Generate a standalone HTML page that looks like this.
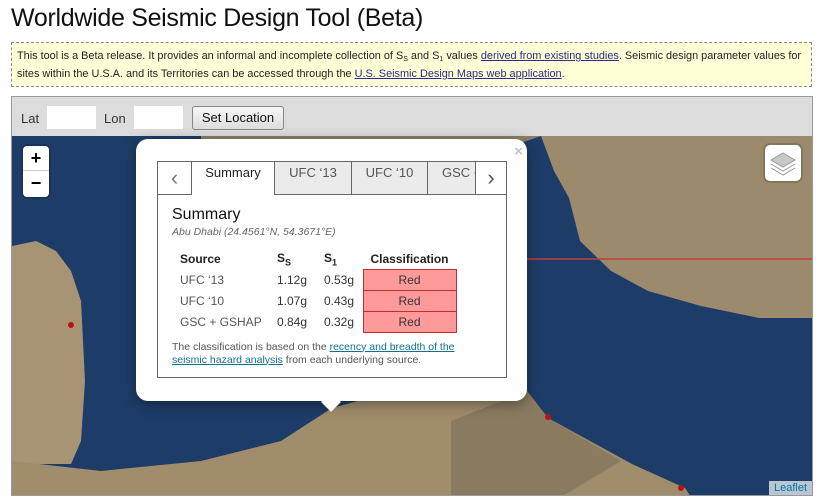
<!DOCTYPE html>
<html><head><style>
*{box-sizing:border-box}
body{margin:0;width:822px;height:500px;overflow:hidden;background:#fff;font-family:"Liberation Sans",Arial,sans-serif;position:relative}
h1{position:absolute;left:11px;top:4px;margin:0;font-weight:normal;font-size:25px;color:#111;letter-spacing:-0.3px}
.note{position:absolute;left:11px;top:42px;width:801px;height:45px;background:#ffffd8;border:1px dashed #888;font-size:10.9px;line-height:16px;padding:5px 5px;color:#222;white-space:nowrap;overflow:hidden}
.note a{color:#2a2a8a}
.note sub{font-size:7px;vertical-align:baseline;position:relative;top:2px}
.map{position:absolute;left:11px;top:96px;width:802px;height:400px;border:1px solid #999;overflow:hidden}
.bar{position:absolute;left:0;top:0;width:100%;height:39px;background:#dcdcdc;font-size:13px;color:#333}
.bar span{position:absolute;top:14px}
.inp{position:absolute;top:9px;width:49px;height:23px;background:#fff}
.btn{position:absolute;left:180px;top:9px;width:92px;height:24px;border:1px solid #888;border-radius:3px;background:linear-gradient(#f6f6f6,#ddd);font-size:13px;text-align:center;line-height:22px;color:#111}
svg.bg{position:absolute;left:0;top:39px}
.zoom{position:absolute;left:11px;top:49px;width:26px;height:51px;background:#fff;border-radius:4px;box-shadow:0 0 0 2px rgba(0,0,0,.15)}
.zoom div{height:25px;text-align:center;font-weight:bold;font-size:18px;line-height:24px;color:#000}
.layers{position:absolute;left:753px;top:48px;width:36px;height:36px;background:#fff;border-radius:5px;box-shadow:0 0 0 2px rgba(0,0,0,.15)}
.attr{position:absolute;right:0;bottom:0;background:rgba(255,255,255,.7);font-size:11px;color:#0078a8;padding:1px 5px}
.pop{position:absolute;left:124px;top:42px;width:391px;height:262px;background:#fff;border-radius:12px;box-shadow:0 3px 14px rgba(0,0,0,.4)}
.tip{position:absolute;left:188px;top:256px;width:14px;height:14px;background:#fff;transform:rotate(45deg)}
.x{position:absolute;right:4px;top:4px;color:#c3c3c3;font-size:15px;font-weight:bold}
.box{position:absolute;left:21px;top:22px;width:350px;height:217px;border:1px solid #666}
.tabs{position:absolute;left:0;top:0;width:348px;height:33px}
.t{position:absolute;top:0;height:33px;border-right:1px solid #666;border-bottom:1px solid #666;background:#ebebeb;font-size:13px;color:#555;text-align:center;line-height:20px;padding-top:1px;overflow:hidden;white-space:nowrap}
.content{position:absolute;left:14px;top:44px;width:320px}
.content h2{margin:0;font-weight:normal;font-size:16px;color:#111}
.loc{font-style:italic;font-size:10.5px;color:#666;margin-top:2px}
table{border-collapse:collapse;margin-top:11px;margin-left:8px;font-size:12px}
th{font-weight:bold;color:#222;text-align:left;padding:0 8px 0 0;height:20px}
td{color:#555;padding:0 8px 0 0;height:21px}
td.v{color:#333}
td.r{background:#ff9a9a;border:1px solid #c03030;text-align:center;color:#333;width:93px;padding:0}
.foot{font-size:10.5px;color:#555;line-height:13px;margin-top:8px}
.foot a{color:#107090}
</style></head><body>
<h1>Worldwide Seismic Design Tool (Beta)</h1>
<div class="note">This tool is a Beta release. It provides an informal and incomplete collection of S<sub>S</sub> and S<sub>1</sub> values <a href="#">derived from existing studies</a>. Seismic design parameter values for<br>sites within the U.S.A. and its Territories can be accessed through the <a href="#">U.S. Seismic Design Maps web application</a>.</div>
<div class="map">
<div class="bar"><span style="left:9px">Lat</span><div class="inp" style="left:35px"></div><span style="left:92px">Lon</span><div class="inp" style="left:122px"></div><div class="btn">Set Location</div></div>
<svg class="bg" width="802" height="361" viewBox="11 135 802 361">
<rect x="11" y="135" width="802" height="361" fill="#1d3d68"/>
<polygon fill="#8f7f63" points="200,135 540,135 520,142 200,142"/>
<polygon fill="#9c8a6c" points="540,135 553,170 568,197 579,240 610,270 647,290 700,305 758,317 813,317 813,135"/>
<polygon fill="#a79474" points="11,245 35,240 55,250 70,270 80,300 84,380 80,440 70,463 11,463"/>
<polygon fill="#a08d6c" points="11,460 100,470 200,460 280,440 331,407 368,397 430,380 526,390 547,417 631,463 684,487 690,496 11,496"/>
<polygon fill="#8a7a60" points="450,420 526,390 547,417 620,460 560,496 450,496"/>
<line x1="526" y1="258" x2="813" y2="258" stroke="#c04040" stroke-width="1.5"/>
<circle cx="70" cy="324" r="3" fill="#c01010"/><circle cx="547" cy="416" r="3" fill="#c01010"/><circle cx="680" cy="487" r="3" fill="#c01010"/>
</svg>
<div class="zoom"><div style="border-bottom:1px solid #ccc">+</div><div>−</div></div>
<div class="layers"><svg width="36" height="36"><polygon points="18,8 30,15 18,22 6,15" fill="#c8c8c8" stroke="#999"/><polyline points="6,19 18,26 30,19" fill="none" stroke="#999"/><polyline points="6,23 18,30 30,23" fill="none" stroke="#999"/></svg></div>
<div class="attr">Leaflet</div>
<div class="pop"><div class="tip"></div>
<div class="x">×</div>
<div class="box">
<div class="tabs">
<div class="t" style="left:0;width:34px;background:#fff;font-size:22px;color:#777;line-height:30px">‹</div>
<div class="t" style="left:34px;width:83px;background:#fff;border-bottom:none;color:#222">Summary</div>
<div class="t" style="left:117px;width:77px">UFC ‘13</div>
<div class="t" style="left:194px;width:76px">UFC ‘10</div>
<div class="t" style="left:270px;width:48px;text-align:left;padding-left:14px">GSC +</div>
<div class="t" style="left:318px;width:30px;background:#fff;border-right:none;font-size:22px;color:#555;line-height:30px">›</div>
</div>
<div class="content">
<h2>Summary</h2>
<div class="loc">Abu Dhabi (24.4561°N, 54.3671°E)</div>
<table>
<tr><th style="width:97px">Source</th><th style="width:47px">S<sub style="font-size:9px">S</sub></th><th style="width:39px">S<sub style="font-size:9px">1</sub></th><th style="text-align:center;padding:0">Classification</th></tr>
<tr><td>UFC ‘13</td><td class="v">1.12g</td><td class="v">0.53g</td><td class="r">Red</td></tr>
<tr><td>UFC ‘10</td><td class="v">1.07g</td><td class="v">0.43g</td><td class="r">Red</td></tr>
<tr><td>GSC + GSHAP</td><td class="v">0.84g</td><td class="v">0.32g</td><td class="r">Red</td></tr>
</table>
<div class="foot">The classification is based on the <a href="#">recency and breadth of the seismic hazard analysis</a> from each underlying source.</div>
</div>
</div>
</div>
</div>
</body></html>
